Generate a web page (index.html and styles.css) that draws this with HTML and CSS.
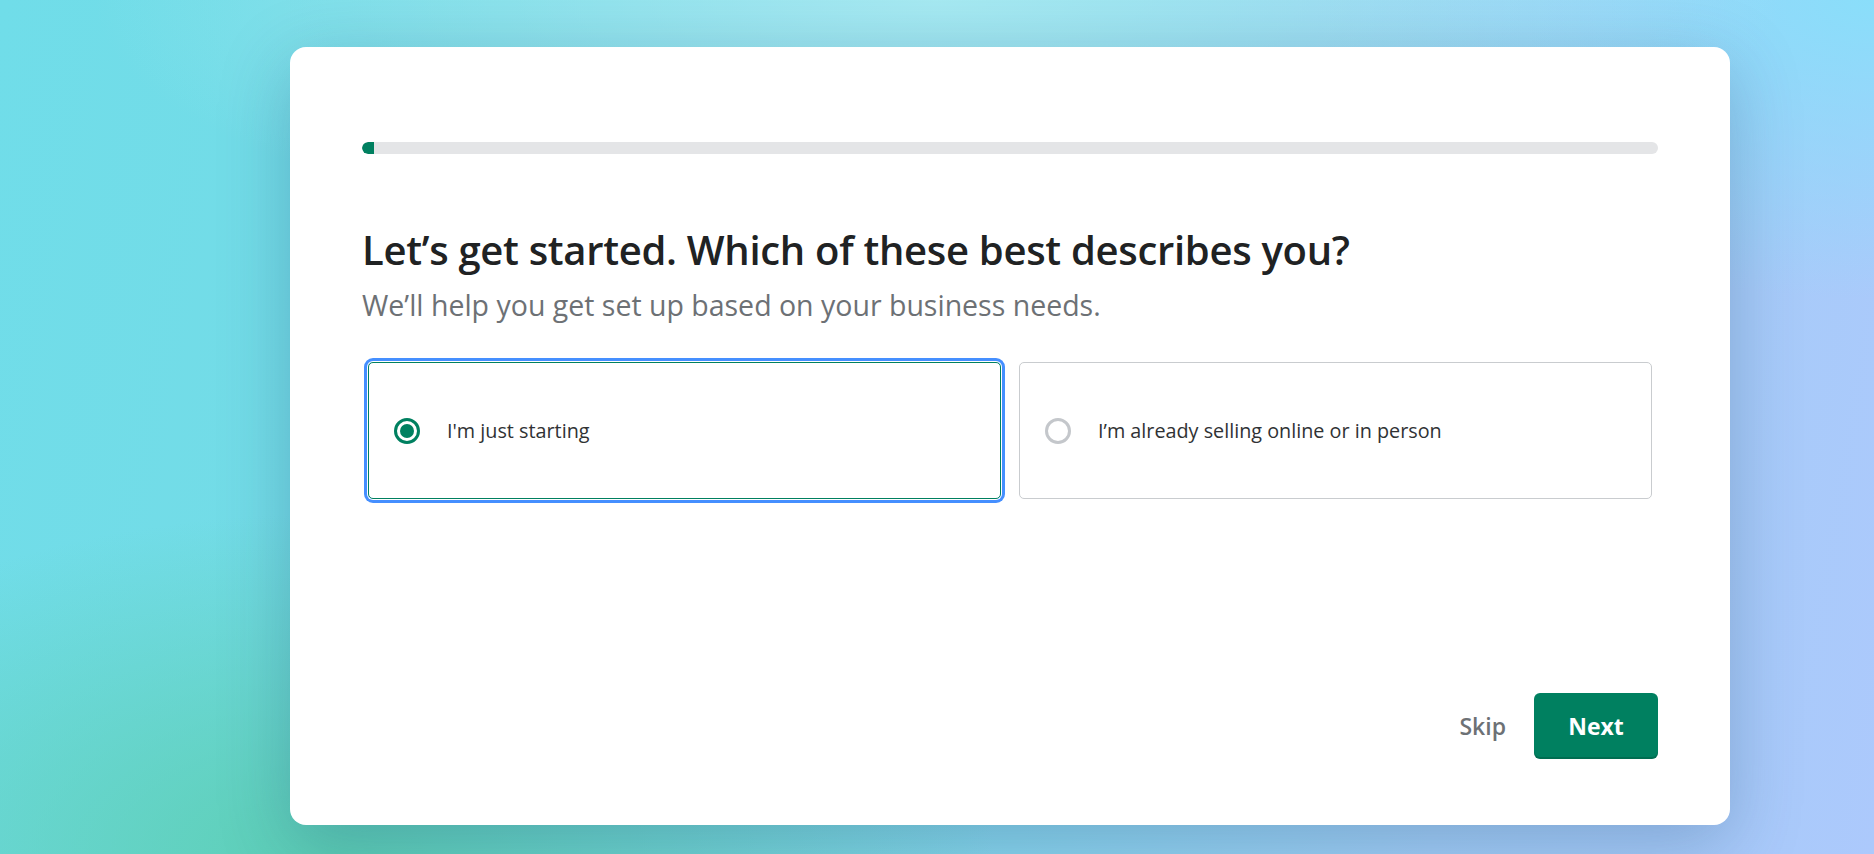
FILE: index.html
```html
<!DOCTYPE html>
<html lang="en">

<head>
    <meta charset="UTF-8">
    <meta name="viewport" content="width=device-width, initial-scale=1.0">
    <title>Get started</title>
    <link rel="stylesheet" href="styles.css">
</head>

<body>
    <div class="onboarding">
        <div class="card">
            <!-- Progress -->
            <div class="progress">
                <div class="progress-fill" style="width: 12px"></div>
            </div>

            <!-- Question -->
            <div class="question">
                <h1 class="question-title">Let’s get started. Which of these best describes you?</h1>
                <p class="question-subtitle">We’ll help you get set up based on your business needs.</p>
            </div>

            <div class="options">
                <label class="option option-selected">
                    <input type="radio" name="stage" value="starting" checked>
                    <span class="radio"></span>
                    <span class="option-label">I'm just starting</span>
                </label>
                <label class="option">
                    <input type="radio" name="stage" value="selling">
                    <span class="radio"></span>
                    <span class="option-label">I’m already selling online or in person</span>
                </label>
            </div>

            <!-- Footer buttons -->
            <div class="actions">
                <button type="button" class="skip-button">Skip</button>
                <button type="button" class="next-button">Next</button>
            </div>
        </div>
    </div>
</body>

</html>
```

FILE: styles.css
```css
html,
body {
    height: 100%;
}

body {
    font-family: "Open Sans", "Noto Sans", Arial, sans-serif;
    margin: 0;
    padding: 0;
    box-sizing: border-box;
    color: #202223;
    overflow: hidden;
    background:
        radial-gradient(ellipse 45% 30% at 50% 0%, rgba(170, 235, 242, 0.9) 0%, rgba(170, 235, 242, 0) 100%),
        radial-gradient(ellipse 30% 35% at 100% 0%, rgba(136, 223, 250, 0.95) 0%, rgba(136, 223, 250, 0) 100%),
        radial-gradient(ellipse 35% 40% at 18% 100%, rgba(90, 205, 175, 0.9) 0%, rgba(90, 205, 175, 0) 100%),
        linear-gradient(100deg, #70dde9 0%, #74dbe6 25%, #86d6ec 55%, #a2cdf6 78%, #acc9fc 100%);
}

.onboarding {
    display: flex;
    padding: 47px 143px 0 290px;
}

.card {
    display: flex;
    flex-direction: column;
    width: 1440px;
    height: 778px;
    box-sizing: border-box;
    padding: 95px 72px 66px;
    background-color: #fff;
    border-radius: 16px;
    box-shadow: 0 18px 70px rgba(25, 70, 110, 0.28);
}

/* Progress bar */
.progress {
    height: 12px;
    border-radius: 6px;
    background-color: #e4e5e7;
    overflow: hidden;
}

.progress-fill {
    height: 100%;
    border-radius: 6px 0 0 6px;
    background-color: #008060;
}

.question {
    margin-top: 72px;
}

.question-title {
    margin: 0;
    font-size: 40px;
    line-height: 48px;
    font-weight: 600;
    letter-spacing: -0.3px;
    color: #202223;
}

.question-subtitle {
    margin: 13px 0 0;
    font-size: 28.5px;
    line-height: 36px;
    font-weight: 400;
    color: #6d7175;
}

/* Options */
.options {
    display: grid;
    grid-template-columns: 1fr 1fr;
    gap: 18px;
    margin-top: 39px;
    padding: 0 6px;
}

.option {
    display: flex;
    align-items: center;
    height: 137px;
    box-sizing: border-box;
    padding: 0 25px;
    border: 1px solid #c9cccf;
    border-radius: 5px;
    cursor: pointer;
}

.option input {
    display: none;
}

.option-selected {
    border-color: #008060;
    box-shadow: 0 0 0 1px #fff, 0 0 0 4px #458fff;
}

.radio {
    position: relative;
    width: 26px;
    height: 26px;
    box-sizing: border-box;
    border: 3px solid #c4c7cb;
    border-radius: 50%;
    flex-shrink: 0;
}

.option-selected .radio {
    border-color: #008060;
}

.option-selected .radio::after {
    content: "";
    position: absolute;
    top: 3px;
    left: 3px;
    width: 14px;
    height: 14px;
    border-radius: 50%;
    background-color: #008060;
}

.option-label {
    margin-left: 27px;
    font-size: 19.8px;
    color: #303234;
}

/* Footer */
.actions {
    display: flex;
    justify-content: flex-end;
    align-items: center;
    gap: 28px;
    margin-top: auto;
}

.skip-button {
    padding: 0;
    background: none;
    border: none;
    font-family: inherit;
    font-size: 23px;
    font-weight: 600;
    color: #6d7175;
    cursor: pointer;
}

.next-button {
    width: 124px;
    height: 66px;
    background-color: #008060;
    color: #fff;
    border: none;
    border-radius: 6px;
    box-shadow: inset 0 -2px 0 rgba(0, 0, 0, 0.15);
    font-family: inherit;
    font-size: 23px;
    font-weight: 700;
    cursor: pointer;
}

.next-button:hover {
    background-color: #006e52;
}
```
